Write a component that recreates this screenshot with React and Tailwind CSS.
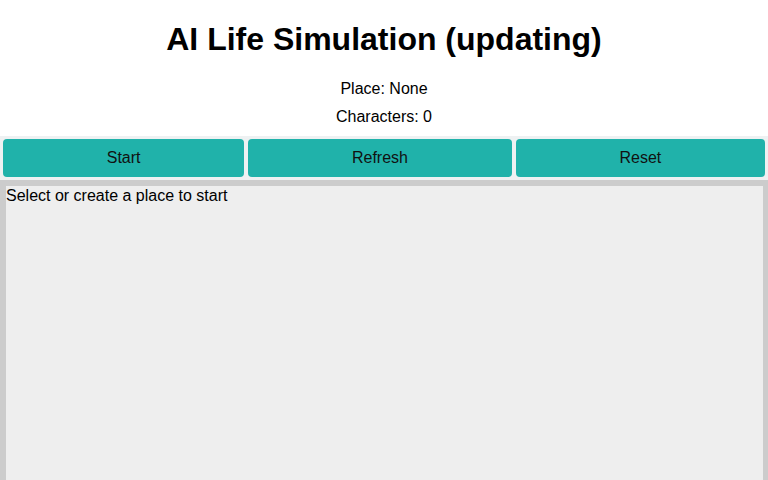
export default function App() {
  return (
    <div className="min-h-screen bg-white text-black font-['Liberation_Sans',Arial,sans-serif]">
      <h1 className="text-center text-[32px] font-bold leading-[37px] pt-[21px]">AI Life Simulation (updating)</h1>
      <div className="text-center text-base leading-[18px] mt-[22px]">Place: None</div>
      <div className="text-center text-base leading-[18px] mt-[10px]">Characters: 0</div>

      <div className="mt-[10px] bg-[#eef1f2] flex gap-1 p-[3px]">
        <button className="flex-auto h-[38px] rounded bg-[#20b2aa] text-[#111] text-base">Start</button>
        <button className="flex-auto h-[38px] rounded bg-[#20b2aa] text-[#111] text-base">Refresh</button>
        <button className="flex-auto h-[38px] rounded bg-[#20b2aa] text-[#111] text-base">Reset</button>
      </div>

      <div className="bg-[#cccccc] pl-[6px] pr-[5px] pt-[6px] h-[300px]">
        <div className="bg-[#eeeeee] h-full text-base leading-[18px] pt-[1px]">Select or create a place to start</div>
      </div>
    </div>
  );
}
